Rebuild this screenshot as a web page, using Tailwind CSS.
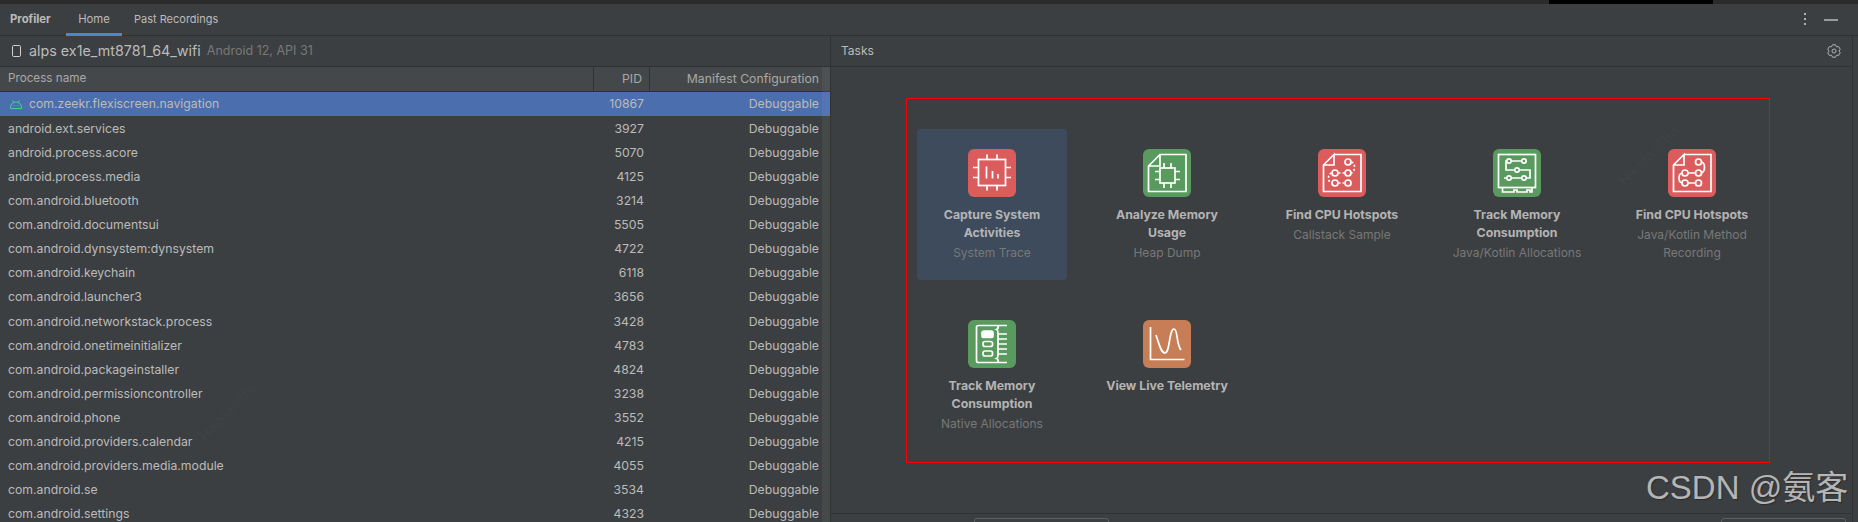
<!DOCTYPE html>
<html lang="en">
<head>
    <meta charset="UTF-8">
    <title>Profiler</title>
    <script src="https://cdn.jsdelivr.net/npm/@tailwindcss/browser@4"></script>
</head>
<body class="bg-[#3c3f41] overflow-hidden">
<div class="relative w-[1858px] h-[522px] overflow-hidden flex flex-col bg-[#3c3f41] text-[#bbbbbb] text-[12px] font-['Inter',sans-serif]">

    <!-- Window top strip -->
    <div class="h-[4px] shrink-0 bg-[#2b2b2b] pl-[1549px]">
        <div class="w-[164px] h-[4px] bg-black"></div>
    </div>

    <!-- Tool window tabs -->
    <div class="h-[32px] shrink-0 flex items-stretch border-b border-[#323232] pr-[20px]">
        <span class="ml-[10px] w-[56px] flex items-center font-bold text-[11.3px] text-[#bbbbbb]">Profiler</span>
        <div class="relative w-[56px] flex items-center justify-center text-[11.3px]">
            <span>Home</span>
            <div class="absolute left-0 right-0 -bottom-px h-[3px] bg-[#4a88c7]"></div>
        </div>
        <span class="ml-[12px] flex items-center text-[11px]">Past Recordings</span>
        <div class="ml-auto flex items-center gap-[17px]">
            <svg class="w-[4px] h-[14px]" viewBox="0 0 4 14" fill="#afb1b3"><rect x="1" y="0" width="2" height="2"/><rect x="1" y="5" width="2" height="2"/><rect x="1" y="10" width="2" height="2"/></svg>
            <div class="w-[14px] h-[2px] bg-[#9a9a9a]"></div>
        </div>
    </div>

    <!-- Body -->
    <div class="flex-1 min-h-0 flex">

        <!-- Process list -->
        <div class="relative w-[830px] shrink-0 flex flex-col text-[12.25px]">
            <div class="h-[31px] shrink-0 flex items-center pl-[12px] border-b border-[#323232]">
                <svg class="w-[9px] h-[12px]" viewBox="0 0 9 12" fill="none" stroke="#d0d0d0" stroke-width="1"><rect x="0.5" y="0.5" width="8" height="11" rx="1.2"/></svg>
                <span class="ml-[8px] text-[14.3px] text-[#bbbbbb]">alps ex1e_mt8781_64_wifi</span>
                <span class="ml-[6px] text-[#787878] text-[12.5px]">Android 12, API 31</span>
            </div>
            <div class="h-[25px] shrink-0 grid grid-cols-[594px_56px_180px] items-stretch bg-[#45484a] border-b border-[#2f3133] text-[#a8a8a8]">
                <span class="pl-[8px] flex items-center border-r border-[#323232] text-[11.7px]">Process name</span>
                <span class="pr-[7px] flex items-center justify-end border-r border-[#323232]">PID</span>
                <span class="pr-[11px] flex items-center justify-end">Manifest Configuration</span>
            </div>
            <div class="flex-1 min-h-0 overflow-hidden">
                <div class="h-[24px] mb-px grid grid-cols-[594px_50px_186px] items-center bg-[#4b6eaf]">
                    <span class="pl-[10px] flex items-center gap-[7px]">
                        <svg class="w-[12px] h-[9px]" viewBox="0 0 12 9" fill="none" stroke="#3ad58c" stroke-width="1"><path d="M0.5 8.5V7A5.5 5 0 0 1 11.5 7V8.5ZM2.5 0.5L3.8 2.6M9.5 0.5L8.2 2.6"/><path d="M3.5 5.5h1M7.5 5.5h1"/></svg>
                        com.zeekr.flexiscreen.navigation
                    </span>
                    <span class="text-right">10867</span>
                    <span class="text-right pr-[11px]">Debuggable</span>
                </div>
                <div class="h-[24px] grid grid-cols-[594px_50px_186px] items-center"><span class="pl-[8px]">android.ext.services</span><span class="text-right">3927</span><span class="text-right pr-[11px]">Debuggable</span></div>
                <div class="h-[24px] grid grid-cols-[594px_50px_186px] items-center"><span class="pl-[8px]">android.process.acore</span><span class="text-right">5070</span><span class="text-right pr-[11px]">Debuggable</span></div>
                <div class="h-[24px] grid grid-cols-[594px_50px_186px] items-center"><span class="pl-[8px]">android.process.media</span><span class="text-right">4125</span><span class="text-right pr-[11px]">Debuggable</span></div>
                <div class="h-[24px] grid grid-cols-[594px_50px_186px] items-center"><span class="pl-[8px]">com.android.bluetooth</span><span class="text-right">3214</span><span class="text-right pr-[11px]">Debuggable</span></div>
                <div class="h-[24px] grid grid-cols-[594px_50px_186px] items-center"><span class="pl-[8px]">com.android.documentsui</span><span class="text-right">5505</span><span class="text-right pr-[11px]">Debuggable</span></div>
                <div class="h-[24px] grid grid-cols-[594px_50px_186px] items-center"><span class="pl-[8px]">com.android.dynsystem:dynsystem</span><span class="text-right">4722</span><span class="text-right pr-[11px]">Debuggable</span></div>
                <div class="h-[24px] grid grid-cols-[594px_50px_186px] items-center"><span class="pl-[8px]">com.android.keychain</span><span class="text-right">6118</span><span class="text-right pr-[11px]">Debuggable</span></div>
                <div class="h-[24px] mb-px grid grid-cols-[594px_50px_186px] items-center"><span class="pl-[8px]">com.android.launcher3</span><span class="text-right">3656</span><span class="text-right pr-[11px]">Debuggable</span></div>
                <div class="h-[24px] grid grid-cols-[594px_50px_186px] items-center"><span class="pl-[8px]">com.android.networkstack.process</span><span class="text-right">3428</span><span class="text-right pr-[11px]">Debuggable</span></div>
                <div class="h-[24px] grid grid-cols-[594px_50px_186px] items-center"><span class="pl-[8px]">com.android.onetimeinitializer</span><span class="text-right">4783</span><span class="text-right pr-[11px]">Debuggable</span></div>
                <div class="h-[24px] grid grid-cols-[594px_50px_186px] items-center"><span class="pl-[8px]">com.android.packageinstaller</span><span class="text-right">4824</span><span class="text-right pr-[11px]">Debuggable</span></div>
                <div class="h-[24px] grid grid-cols-[594px_50px_186px] items-center"><span class="pl-[8px]">com.android.permissioncontroller</span><span class="text-right">3238</span><span class="text-right pr-[11px]">Debuggable</span></div>
                <div class="h-[24px] grid grid-cols-[594px_50px_186px] items-center"><span class="pl-[8px]">com.android.phone</span><span class="text-right">3552</span><span class="text-right pr-[11px]">Debuggable</span></div>
                <div class="h-[24px] grid grid-cols-[594px_50px_186px] items-center"><span class="pl-[8px]">com.android.providers.calendar</span><span class="text-right">4215</span><span class="text-right pr-[11px]">Debuggable</span></div>
                <div class="h-[24px] grid grid-cols-[594px_50px_186px] items-center"><span class="pl-[8px]">com.android.providers.media.module</span><span class="text-right">4055</span><span class="text-right pr-[11px]">Debuggable</span></div>
                <div class="h-[24px] grid grid-cols-[594px_50px_186px] items-center"><span class="pl-[8px]">com.android.se</span><span class="text-right">3534</span><span class="text-right pr-[11px]">Debuggable</span></div>
                <div class="h-[24px] grid grid-cols-[594px_50px_186px] items-center"><span class="pl-[8px]">com.android.settings</span><span class="text-right">4323</span><span class="text-right pr-[11px]">Debuggable</span></div>
            </div>
            <!-- scrollbar track over the table -->
            <div class="absolute right-0 top-[31px] bottom-0 w-[8px] bg-white/5"></div>
        </div>

        <!-- Tasks -->
        <div class="flex-1 min-w-0 flex flex-col border-l border-[#323232] border-r mr-[5px]">
            <div class="h-[31px] shrink-0 flex items-center justify-between pl-[10px] pr-[11px] border-b border-[#323232]">
                <span>Tasks</span>
                <svg class="w-[14px] h-[14px]" viewBox="0 0 14 14" fill="none" stroke="#afb1b3" stroke-width="1" stroke-linejoin="round"><path d="M5.500.8h3l1 2 2.200-.2 1.500 2.600L12 7l1.200 1.800-1.500 2.600-2.200-.2-1 2h-3l-1-2-2.200.2L.8 8.800 2 7 .8 5.200l1.500-2.600 2.200.2z"/><circle cx="7" cy="7" r="2"/></svg>
            </div>
            <div class="flex-1 min-h-0 pl-[75px] pt-[31px]">
                <div class="w-[864px] h-[365px] border-[1.5px] border-[#ff0000] pl-[10px] pt-[30px]">
                    <div class="grid grid-cols-[150px_150px_150px_150px_150px] auto-rows-[151px] gap-x-[25px] gap-y-[20px] leading-[18px]">
                        <!-- System Trace -->
                        <div class="h-[151px] rounded-[4px] bg-[#3d4b5c] flex flex-col items-center px-[8px] pt-[20px] text-center">
                            <svg class="w-[48px] h-[48px]" viewBox="0 0 48 48" fill="none" stroke="#fff" stroke-width="1.7"><rect width="48" height="48" rx="6" fill="#db5c5c" stroke="none"/><rect x="10.5" y="10.5" width="27" height="26"/><path d="M19 5.5v5M29 5.5v5M19 36.5v5M29 36.5v5M5 18.5h5.5M5 28.5h5.5M37.5 18.5h5.5M37.5 28.5h5.5M18.5 17.5v12M24.5 22v7.5M30 25v4.5"/></svg>
                            <div class="mt-[9px] font-bold text-[12.3px] text-[#b4b4b4]">Capture System Activities</div>
                            <div class="mt-[2px] text-[#787878]">System Trace</div>
                        </div>
                        <!-- Heap Dump -->
                        <div class="flex flex-col items-center px-[8px] pt-[20px] text-center">
                            <svg class="w-[48px] h-[48px]" viewBox="0 0 48 48" fill="none" stroke="#fff" stroke-width="1.7"><rect width="48" height="48" rx="6" fill="#599a5e" stroke="none"/><path d="M17 5.500H43V42.500H5.500V17ZM17 5.500V17H5.500"/><rect x="17" y="19" width="15" height="15"/><path d="M21 14v5M28 14v5M21 34v5M28 34v5M12 22.500h5M12 30.500h5M32 22.500h5M32 30.500h5"/></svg>
                            <div class="mt-[9px] font-bold text-[12.3px] text-[#b4b4b4]">Analyze Memory Usage</div>
                            <div class="mt-[2px] text-[#787878]">Heap Dump</div>
                        </div>
                        <!-- Callstack Sample -->
                        <div class="flex flex-col items-center px-[8px] pt-[20px] text-center">
                            <svg class="w-[48px] h-[48px]" viewBox="0 0 48 48" fill="none" stroke="#fff" stroke-width="1.7"><rect width="48" height="48" rx="6" fill="#db5c5c" stroke="none"/><path d="M16 5.500H43V42.500H5.500V16L16 5.500V16H5.500"/><circle cx="30" cy="13" r="3"/><circle cx="17" cy="24" r="3"/><circle cx="30" cy="24" r="3"/><circle cx="17" cy="34" r="3"/><circle cx="30" cy="34" r="3"/><path stroke-dasharray="2 2" d="M20.500 24h6M20.500 34h6M33.500 13c4 1 4 9 0 11M13.500 24c-4 1-4 9 0 10"/></svg>
                            <div class="mt-[9px] font-bold text-[12.3px] text-[#b4b4b4] whitespace-nowrap">Find CPU Hotspots</div>
                            <div class="mt-[2px] text-[#787878]">Callstack Sample</div>
                        </div>
                        <!-- Java/Kotlin Allocations -->
                        <div class="flex flex-col items-center px-[8px] pt-[20px] text-center">
                            <svg class="w-[48px] h-[48px]" viewBox="0 0 48 48" fill="none" stroke="#fff" stroke-width="1.7"><rect width="48" height="48" rx="6" fill="#599a5e" stroke="none"/><rect x="5.500" y="5.500" width="37" height="33"/><path d="M9.500 38.500v4.500H21v-2h3v2H34v-2h3v2h2V38.500"/><circle cx="16" cy="12" r="2.200"/><circle cx="31" cy="12" r="2.200"/><circle cx="24" cy="21" r="2.200"/><circle cx="16" cy="29" r="2.200"/><circle cx="31" cy="29" r="2.200"/><path d="M18.200 12h10.600M13.800 12H13v9h8.800M26.200 21H37v8H33.200M18.200 29h10.600M13.800 29H11"/></svg>
                            <div class="mt-[9px] font-bold text-[12.3px] text-[#b4b4b4]">Track Memory Consumption</div>
                            <div class="mt-[2px] text-[#787878]">Java/Kotlin Allocations</div>
                        </div>
                        <!-- Method Recording -->
                        <div class="flex flex-col items-center px-[8px] pt-[20px] text-center">
                            <svg class="w-[48px] h-[48px]" viewBox="0 0 48 48" fill="none" stroke="#fff" stroke-width="1.7"><rect width="48" height="48" rx="6" fill="#db5c5c" stroke="none"/><path d="M16 5.500H43V42.500H5.500V16L16 5.500V16H5.500"/><circle cx="30.500" cy="13" r="3"/><circle cx="17" cy="24" r="3"/><circle cx="30.500" cy="24" r="3"/><circle cx="17" cy="34" r="3"/><circle cx="30.500" cy="34" r="3"/><path d="M20 24h7.500M20 34h7.500M33.500 13c4 1 4 9 0 11M14 24c-4 1-4 9 0 10"/></svg>
                            <div class="mt-[9px] font-bold text-[12.3px] text-[#b4b4b4] whitespace-nowrap">Find CPU Hotspots</div>
                            <div class="mt-[2px] text-[#787878]">Java/Kotlin Method Recording</div>
                        </div>
                        <!-- Native Allocations -->
                        <div class="flex flex-col items-center px-[8px] pt-[20px] text-center">
                            <svg class="w-[48px] h-[48px]" viewBox="0 0 48 48" fill="none" stroke="#fff" stroke-width="1.7"><rect width="48" height="48" rx="6" fill="#599a5e" stroke="none"/><path d="M30 5.500H10.500a2 2 0 0 0-2 2v33a2 2 0 0 0 2 2H30M30 5.500H39M30 5.500Q31 8.500 28.500 9.500Q30 10 30 13V35Q30 38 28.500 38.500Q31 39.500 30 42.500H39M30 14h9M30 19h9M30 24h9M30 29h9M30 34h9"/><rect x="14" y="11" width="11" height="6.500" rx="2" fill="#fff"/><rect x="15" y="21.500" width="9.500" height="5" rx="2"/><rect x="15" y="31" width="9.500" height="5" rx="2"/></svg>
                            <div class="mt-[9px] font-bold text-[12.3px] text-[#b4b4b4]">Track Memory Consumption</div>
                            <div class="mt-[2px] text-[#787878]">Native Allocations</div>
                        </div>
                        <!-- Live Telemetry -->
                        <div class="flex flex-col items-center px-[8px] pt-[20px] text-center">
                            <svg class="w-[48px] h-[48px]" viewBox="0 0 48 48" fill="none" stroke="#fff" stroke-width="1.7"><rect width="48" height="48" rx="6" fill="#c77d55" stroke="none"/><path d="M7.500 7v32.500H41.500"/><path d="M13 15C16 24 18 33 22 33C27 33 26 9 31 9C35 9 33 24 38 30"/></svg>
                            <div class="mt-[9px] font-bold text-[12.3px] text-[#b4b4b4] whitespace-nowrap">View Live Telemetry</div>
                        </div>
                    </div>
                </div>
            </div>
            <!-- Bottom bar, cut off by the window edge -->
            <div class="h-[9px] shrink-0 border-t border-[#323232] relative overflow-hidden">
                <div class="absolute left-[143px] top-[4px] w-[135px] h-[20px] rounded-[3px] border border-[#5e6060]"></div>
                <div class="absolute left-[890px] top-[4px] w-[125px] h-[20px] rounded-[3px] border border-[#5e6060]"></div>
            </div>
        </div>
    </div>

    <!-- Blog watermarks -->
    <span class="absolute left-[1610px] top-[145px] -rotate-45 text-[14px] text-white/[0.03] whitespace-nowrap">HaoeanZhu</span>
    <span class="absolute left-[190px] top-[400px] -rotate-45 text-[14px] text-white/[0.03] whitespace-nowrap">HaoeanZhu</span>
    <span class="absolute left-[1646px] top-[470px] text-[33px] leading-[36px] text-[#b5b5b5] [text-shadow:1px_1px_1px_#2b2b2b] font-['Liberation_Sans','Noto_Sans_CJK_SC',sans-serif] whitespace-nowrap">CSDN @氨客</span>
</div>
</body>
</html>
